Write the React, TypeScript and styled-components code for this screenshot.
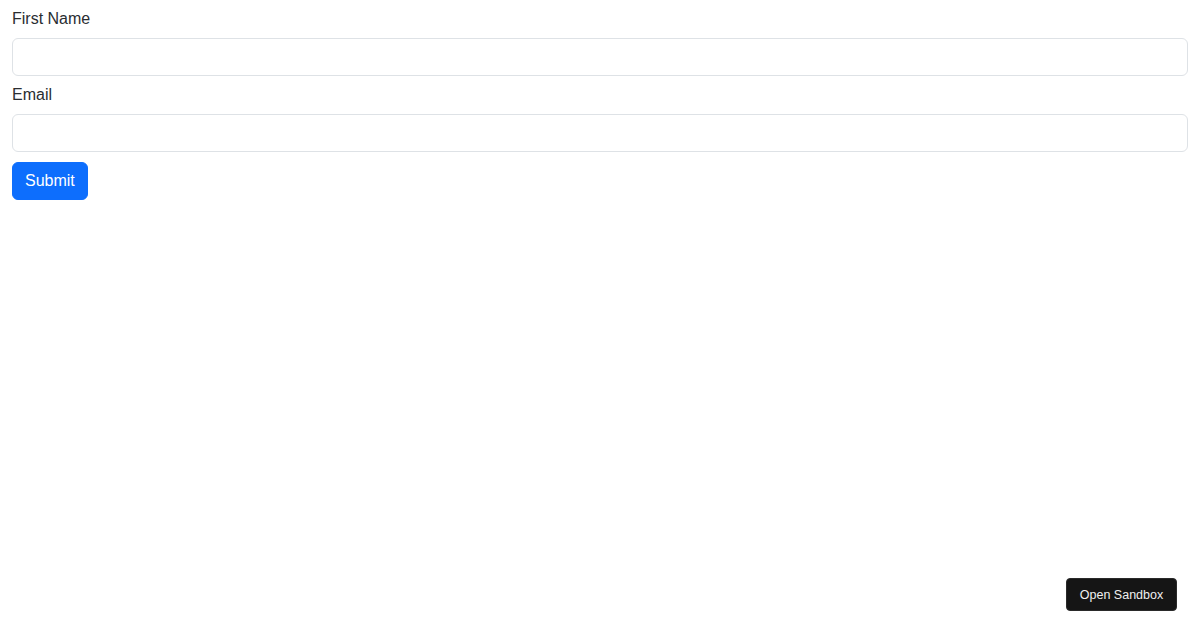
import React from 'react';
import styled, { createGlobalStyle } from 'styled-components';

const GlobalStyle = createGlobalStyle`
	* {
		box-sizing: border-box;
	}
	body {
		margin: 0;
		background: #fff;
		color: #212529;
		font-family: 'Liberation Sans', Arial, sans-serif;
		font-size: 16px;
		line-height: 1.5;
	}
`;

const Page = styled.div`
	padding: 6px 12px;
`;

const Form = styled.form`
	display: flex;
	flex-direction: column;
`;

const Field = styled.div<{ last?: boolean }>`
	display: flex;
	flex-direction: column;
	margin-bottom: ${p => (p.last ? '10px' : '6px')};
`;

const Label = styled.label`
	display: block;
	padding-top: 1px;
	margin-bottom: 7px;
	font-size: 16px;
	line-height: 24px;
	color: #2a2d31;
`;

const Input = styled.input`
	display: block;
	width: 100%;
	height: 38px;
	padding: 6px 12px;
	font-family: inherit;
	font-size: 16px;
	color: #212529;
	background: #fff;
	border: 1px solid #dee2e6;
	border-radius: 6px;
	outline: none;
`;

const SubmitButton = styled.button`
	align-self: flex-start;
	height: 38px;
	padding: 6px 12px;
	font-family: inherit;
	font-size: 16px;
	line-height: 24px;
	color: #fff;
	background: #0d6efd;
	border: 1px solid #0d6efd;
	border-radius: 6px;
	cursor: pointer;
`;

const SandboxButton = styled.button`
	position: fixed;
	right: 23px;
	bottom: 19px;
	width: 111px;
	height: 33px;
	padding: 0;
	font-family: 'Liberation Sans', Arial, sans-serif;
	font-size: 12.5px;
	color: #f0f0f0;
	background: #151515;
	border: 1px solid #2a2a2a;
	border-radius: 4px;
	cursor: pointer;
`;

const App: React.FC = () => {
	return (
		<>
			<GlobalStyle />
			<Page>
				<Form onSubmit={e => e.preventDefault()}>
					<Field>
						<Label htmlFor='firstName'>First Name</Label>
						<Input id='firstName' type='text' />
					</Field>
					<Field last>
						<Label htmlFor='email'>Email</Label>
						<Input id='email' type='email' />
					</Field>
					<SubmitButton type='submit'>Submit</SubmitButton>
				</Form>
			</Page>
			<SandboxButton>Open Sandbox</SandboxButton>
		</>
	);
};

export default App;
